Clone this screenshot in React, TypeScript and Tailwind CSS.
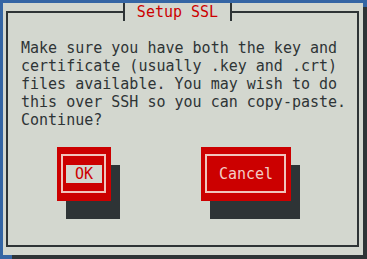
export default function App() {
  const lines = [
    "Make sure you have both the key and",
    "certificate (usually .key and .crt)",
    "files available. You may wish to do",
    "this over SSH so you can copy-paste.",
    "Continue?",
  ];
  return (
    <div className="w-[367px] h-[259px] overflow-hidden bg-[#3465a4] pt-[3px] pl-[3px] font-['DejaVu_Sans_Mono',monospace] text-[15px] leading-[18px]">
      <div className="relative w-[360px] h-[252px] bg-[#d3d7cf] shadow-[9px_4px_0_#2e3436] pt-[8px] pl-[3px] pr-[4px] pb-[8px]">
        <div className="h-full border-2 border-[#2e3436] flex flex-col">
          <div className="pt-[26px] pl-[13px] text-[#2e3436]">
            {lines.map((l) => (
              <div key={l} className="whitespace-pre h-[18px]">
                {l}
              </div>
            ))}
          </div>
          <div className="flex mt-[18px] pl-[49px] gap-[90px]">
            <div className="w-[54px] h-[54px] bg-[#cc0000] shadow-[9px_18px_0_#2e3436] pt-[7px] pl-[4px] pr-[5px] pb-[8px]">
              <div className="h-full border-2 border-[#f1c4bc]">
                <div className="mt-[9px] ml-[3px] w-[36px] h-[18px] bg-[#d3d7cf] text-[#cc0000] flex justify-center">
                  OK
                </div>
              </div>
            </div>
            <div className="w-[90px] h-[54px] bg-[#cc0000] shadow-[9px_18px_0_#2e3436] pt-[7px] pl-[4px] pr-[5px] pb-[8px]">
              <div className="h-full border-2 border-[#f1c4bc]">
                <div className="mt-[9px] ml-[3px] w-[72px] h-[18px] text-[#f3cdc6] flex justify-center">
                  Cancel
                </div>
              </div>
            </div>
          </div>
        </div>
        <div className="absolute top-0 left-[120px] w-[109px] h-[18px] border-l-2 border-r-2 border-[#2e3436] bg-[#d3d7cf] text-[#cc0000] flex justify-center">
          Setup SSL
        </div>
      </div>
    </div>
  );
}
